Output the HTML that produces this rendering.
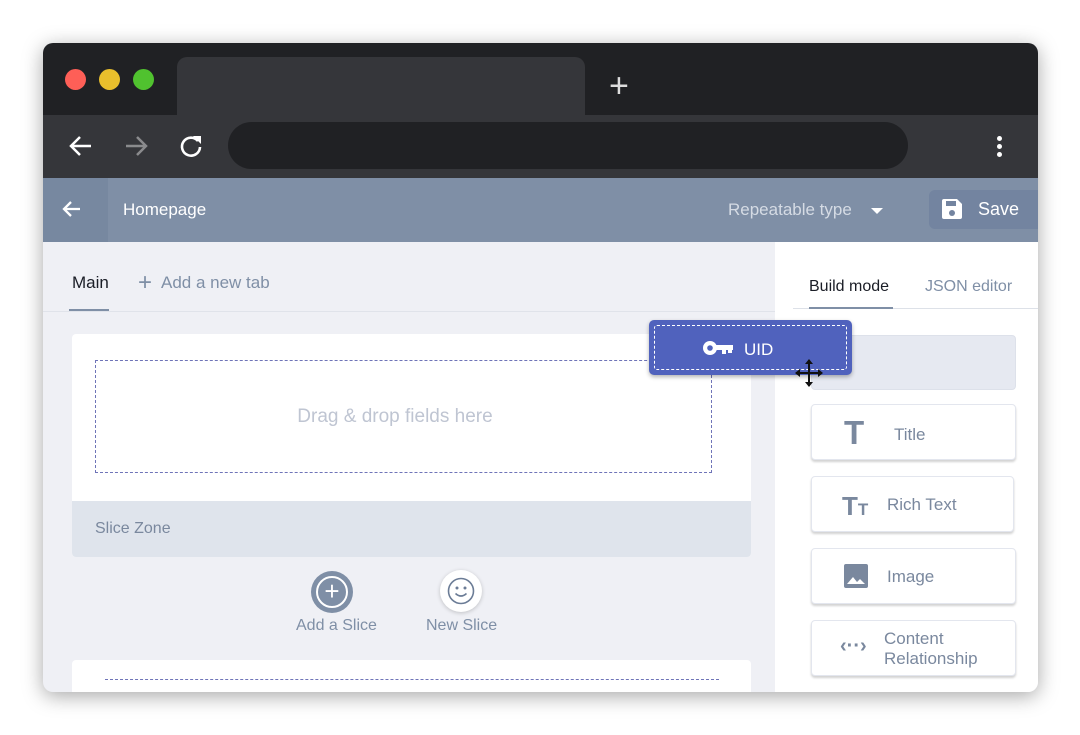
<!DOCTYPE html>
<html><head><style>
*{margin:0;padding:0;box-sizing:border-box}
body{width:1080px;height:735px;background:#fff;font-family:"Liberation Sans",sans-serif;position:relative;overflow:hidden}
.win{position:absolute;left:43px;top:43px;width:995px;height:649px;border-radius:10px;overflow:hidden;background:#eff0f5;box-shadow:0 4px 20px rgba(0,0,0,.35)}
.abs{position:absolute}
.dot{position:absolute;width:21px;height:21px;border-radius:50%;top:26px}
.card{position:absolute;background:#fff;border:1px solid #e3e6ee;border-radius:4px;box-shadow:0 2px 2px rgba(0,0,0,.18);color:#7a889e;font-size:17px}
</style></head><body>
<div class="win">
 <div class="abs" style="left:0;top:0;width:995px;height:72px;background:#202124"></div>
 <div class="abs" style="left:134px;top:14px;width:408px;height:70px;background:#35363a;border-radius:10px 10px 0 0"></div>
 <div class="dot" style="left:22px;background:#fe5f57"></div>
 <div class="dot" style="left:56px;background:#e9bf2c"></div>
 <div class="dot" style="left:90px;background:#50c22f"></div>
 <div class="abs" style="left:566px;top:26px;color:#ddd;font-size:34px;line-height:34px">+</div>
 <div class="abs" style="left:0;top:72px;width:995px;height:63px;background:#35363a"></div>
 <svg class="abs" style="left:24px;top:90px" width="28" height="26" viewBox="0 0 28 26"><path d="M24 13H4M13 4L4 13l9 9" stroke="#fff" stroke-width="2.5" fill="none"/></svg>
 <svg class="abs" style="left:79px;top:90px" width="28" height="26" viewBox="0 0 28 26"><path d="M4 13h20M15 4l9 9-9 9" stroke="#8a8b8d" stroke-width="2.5" fill="none"/></svg>
 <svg class="abs" style="left:134px;top:89px" width="28" height="28" viewBox="0 0 28 28"><path d="M21 9A9 9 0 1 0 23 15" stroke="#fff" stroke-width="2.6" fill="none"/><path d="M16 4h8v8z" fill="#fff"/></svg>
 <div class="abs" style="left:185px;top:79px;width:680px;height:47px;background:#202124;border-radius:24px"></div>
 <div class="abs" style="left:954px;top:93px;width:5px;height:5px;border-radius:3px;background:#fff;box-shadow:0 8px 0 #fff,0 16px 0 #fff"></div>
 <div class="abs" style="left:0;top:135px;width:995px;height:64px;background:#7f8fa6"></div>
 <div class="abs" style="left:0;top:135px;width:65px;height:64px;background:#7788a0"></div>
 <svg class="abs" style="left:18px;top:156px" width="22" height="20" viewBox="0 0 22 20"><path d="M19 10H3M10 3L3 10l7 7" stroke="#fff" stroke-width="2.3" fill="none"/></svg>
 <div class="abs" style="left:80px;top:157px;color:#fff;font-size:17px">Homepage</div>
 <div class="abs" style="left:685px;top:157px;color:#d5dbe4;font-size:17px">Repeatable type</div>
 <div class="abs" style="left:828px;top:165px;border:6px solid transparent;border-top:6px solid #fff;border-bottom:0"></div>
 <div class="abs" style="left:886px;top:147px;width:109px;height:39px;background:#7384a0;border-radius:6px 0 0 6px"></div>
 <svg class="abs" style="left:897px;top:154px" width="24" height="24" viewBox="0 0 24 24"><path d="M2 4a2 2 0 0 1 2-2h13l5 5v13a2 2 0 0 1-2 2H4a2 2 0 0 1-2-2z" fill="#fff"/><rect x="6" y="4" width="10" height="5" fill="#7384a0"/><circle cx="12" cy="16" r="3" fill="#7384a0"/></svg>
 <div class="abs" style="left:935px;top:156px;color:#fff;font-size:18px">Save</div>
 <!-- main -->
 <div class="abs" style="left:29px;top:230px;color:#1a1d26;font-size:17px">Main</div>
 <div class="abs" style="left:26px;top:266px;width:40px;height:2px;background:#7f8fa6"></div>
 <div class="abs" style="left:95px;top:226px;color:#7f8fa6;font-size:24px">+</div>
 <div class="abs" style="left:118px;top:230px;color:#7f8fa6;font-size:17px">Add a new tab</div>
 <div class="abs" style="left:0;top:268px;width:732px;height:1px;background:#e0e3ea"></div>
 <div class="abs" style="left:29px;top:291px;width:679px;height:223px;background:#fff;border-radius:4px"></div>
 <div class="abs" style="left:52px;top:317px;width:617px;height:113px;border:1.5px dashed #6f74b8"></div>
 <div class="abs" style="left:52px;top:363px;width:600px;text-align:center;color:#bfc5d2;font-size:19px">Drag &amp; drop fields here</div>
 <div class="abs" style="left:29px;top:458px;width:679px;height:56px;background:#dfe4ec;border-radius:0 0 4px 4px"></div>
 <div class="abs" style="left:52px;top:477px;color:#7a889e;font-size:16px">Slice Zone</div>
 <div class="abs" style="left:268px;top:528px;width:42px;height:42px;border-radius:50%;background:#7f8fa6"></div>
 <div class="abs" style="left:273px;top:533px;width:32px;height:32px;border-radius:50%;border:2px solid #fff;color:#fff;font-size:26px;line-height:26px;text-align:center">+</div>
 <div class="abs" style="left:253px;top:574px;color:#7f8fa6;font-size:16px">Add a Slice</div>
 <div class="abs" style="left:397px;top:527px;width:42px;height:42px;border-radius:50%;background:#fff;box-shadow:0 1px 4px rgba(0,0,0,.2)"></div>
 <svg class="abs" style="left:403px;top:533px" width="30" height="30" viewBox="0 0 30 30"><circle cx="15" cy="15" r="12.5" stroke="#6b7c96" stroke-width="1.6" fill="none"/><circle cx="11" cy="12" r="1.5" fill="#6b7c96"/><circle cx="19" cy="12" r="1.5" fill="#6b7c96"/><path d="M9.5 17.5q5.5 5 11 0" stroke="#6b7c96" stroke-width="1.6" fill="none"/></svg>
 <div class="abs" style="left:383px;top:574px;color:#7f8fa6;font-size:16px">New Slice</div>
 <div class="abs" style="left:29px;top:617px;width:679px;height:40px;background:#fff;border-radius:4px"></div>
 <div class="abs" style="left:62px;top:636px;width:614px;height:20px;border-top:1.5px dashed #6f74b8"></div>
 <!-- right panel -->
 <div class="abs" style="left:732px;top:199px;width:263px;height:450px;background:#fff"></div>
 <div class="abs" style="left:766px;top:235px;color:#1a1d26;font-size:16px">Build mode</div>
 <div class="abs" style="left:882px;top:235px;color:#7f8fa6;font-size:16px">JSON editor</div>
 <div class="abs" style="left:750px;top:265px;width:245px;height:1px;background:#dde1e8"></div>
 <div class="abs" style="left:766px;top:264px;width:84px;height:2px;background:#7f8fa6"></div>
 <div class="abs" style="left:768px;top:292px;width:205px;height:55px;background:#e6e9f1;border-radius:4px;border:1px solid #dde1ea"></div>
 <div class="card" style="left:768px;top:361px;width:205px;height:56px"><span class="abs" style="left:32px;top:11px;font-size:33px;font-weight:bold;color:#7a889e;line-height:33px">T</span><span class="abs" style="left:82px;top:20px">Title</span></div>
 <div class="card" style="left:768px;top:433px;width:203px;height:56px"><span class="abs" style="left:30px;top:16px;font-size:26px;font-weight:bold;line-height:26px">T<span style="font-size:17px">T</span></span><span class="abs" style="left:75px;top:18px">Rich Text</span></div>
 <div class="card" style="left:768px;top:505px;width:205px;height:56px"><svg class="abs" style="left:32px;top:15px" width="24" height="24" viewBox="0 0 24 24"><rect width="24" height="24" rx="2" fill="#7a889e"/><path d="M3 20l6-7 4 5 3-3 5 5z" fill="#fff"/></svg><span class="abs" style="left:75px;top:18px">Image</span></div>
 <div class="card" style="left:768px;top:577px;width:205px;height:56px"><span class="abs" style="left:28px;top:14px;font-size:20px;font-weight:bold">‹··›</span><span class="abs" style="left:72px;top:8px;line-height:20px">Content<br>Relationship</span></div>
 <!-- UID dragging -->
 <div class="abs" style="left:606px;top:277px;width:203px;height:55px;background:#5062bd;border-radius:5px;box-shadow:0 2px 4px rgba(0,0,0,.3)"></div>
 <div class="abs" style="left:611px;top:282px;width:193px;height:45px;border:1.5px dashed #fff;border-radius:3px"></div>
 <svg class="abs" style="left:660px;top:297px" width="30" height="16" viewBox="0 0 30 16"><circle cx="7" cy="8" r="7" fill="#fff"/><circle cx="7" cy="8" r="2.8" fill="#5062bd"/><rect x="12" y="5" width="18" height="5" fill="#fff"/><rect x="19" y="9" width="4" height="5" fill="#fff"/><rect x="25" y="9" width="4" height="4" fill="#fff"/></svg>
 <div class="abs" style="left:701px;top:297px;color:#fff;font-size:17px">UID</div>
 <svg class="abs" style="left:751px;top:315px" width="30" height="30" viewBox="0 0 30 30"><path d="M15 2v26M2 15h26" stroke="#111" stroke-width="2"/><path d="M15 1l-4 5h8zM15 29l-4-5h8zM1 15l5-4v8zM29 15l-5-4v8z" fill="#111"/></svg>
</div>
</body></html>
